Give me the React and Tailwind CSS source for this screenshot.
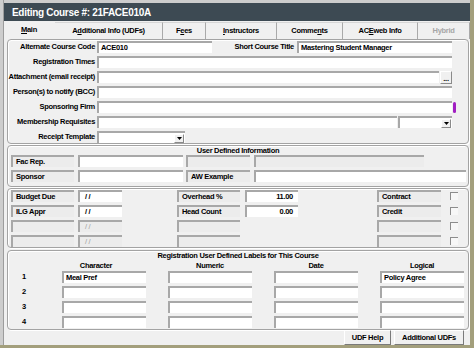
import React from 'react';

const field = 'h-[12px] bg-white border-t-2 border-l-2 border-[#a8a8a8] flex items-center pl-[2px] text-[7.5px] font-bold leading-none whitespace-nowrap overflow-hidden';
const labelBox = 'h-[12px] bg-[#ececec] border-t-2 border-l-2 border-[#a8a8a8] flex items-center pl-[3px] text-[7.5px] font-bold leading-none whitespace-nowrap';
const group = 'w-[462px] border border-[#a3a3a3] rounded-[4px] shadow-[inset_1px_1px_0_#ffffff,1px_1px_0_#ffffff]';

const Arrow = () => (
  <div className="w-[10px] h-[9px] mr-[1px] bg-[#f0f0f0] border border-t-white border-l-white border-r-[#8a8a8a] border-b-[#8a8a8a] flex items-center justify-center">
    <svg width="5" height="3" viewBox="0 0 5 3">
      <path d="M0 0h5L2.5 3z" fill="#000" />
    </svg>
  </div>
);

const Label = ({ children, className = 'w-[89px] pr-[2px]' }) => (
  <div className={`${className} text-right text-[7.5px] font-bold leading-none whitespace-nowrap`}>{children}</div>
);

const Check = () => (
  <div className="w-[8px] h-[8px] ml-[9px] bg-[#f7f7f7] border-t border-l border-[#8c8c8c]" />
);

const tabs = [
  { a: '', u: 'M', b: 'ain', w: 'w-[50px] mr-[1px]', active: true },
  { a: 'A', u: 'd', b: 'ditional Info (UDFs)', w: 'w-[108px]' },
  { a: 'F', u: 'e', b: 'es', w: 'w-[43px]' },
  { a: '', u: 'I', b: 'nstructors', w: 'w-[71px]' },
  { a: 'Comme', u: 'n', b: 'ts', w: 'w-[66px]' },
  { a: 'AC', u: 'E', b: 'web Info', w: 'w-[75px]' },
  { a: 'Hybrid', u: '', b: '', w: 'w-[52px]', disabled: true },
];

const budgetRows = [
  { l: 'Budget Due', d: true, o: 'Overhead %', v: '11.00', c: 'Contract' },
  { l: 'ILG Appr', d: true, o: 'Head Count', v: '0.00', c: 'Credit' },
  { l: '', d: false, o: '', v: null, c: '' },
  { l: '', d: false, o: '', v: null, c: '' },
];

const regRows = [
  ['Meal Pref', '', '', 'Policy Agree'],
  ['', '', '', ''],
  ['', '', '', ''],
  ['', '', '', ''],
];

export default function App() {
  return (
    <div className="w-[474px] h-[348px] bg-[#c9c9c9] flex flex-col overflow-hidden text-black tracking-[-0.3px] font-['Liberation_Sans',Arial,sans-serif]">
      <div className="flex h-[345px]">
        <div className="w-[4px] bg-[#cdcdcd] border-r border-[#9c9c9c]" />
        <div className="w-[466px] flex flex-col bg-[#f0f0f0]">
          <div className="h-[3px] bg-[#cdcdcd]" />
          <div className="h-[18px] bg-[#3d4a53] text-white text-[10px] tracking-[-0.3px] font-bold flex items-center pl-[8px]">
            Editing Course #: 21FACE010A
          </div>

          {/* tabs */}
          <div className="h-[18px] flex">
            {tabs.map((t, i) => (
              <div
                key={i}
                className={`${t.w} flex items-center justify-center text-[7.5px] font-bold ${t.active ? '' : 'border-t border-r border-t-[#d6d6d6] border-r-[#a9a9a9] mt-[1px]'} ${t.disabled ? 'text-[#a6a6a6]' : ''}`}
              >
                {t.a}
                {t.u && <span className="underline underline-offset-1">{t.u}</span>}
                {t.b}
              </div>
            ))}
          </div>

          <div className="pl-[3px] flex flex-col">
            {/* course fields */}
            <div className={`${group} h-[105px] pt-[1px] flex flex-col gap-[3px]`}>
              <div className="h-[12px] flex items-center">
                <Label>Alternate Course Code</Label>
                <div className={`${field} w-[115px]`}>ACE010</div>
                <Label className="w-[85px] pr-[3px]">Short Course Title</Label>
                <div className={`${field} w-[155px]`}>Mastering Student Manager</div>
              </div>
              <div className="h-[12px] flex items-center">
                <Label>Registration Times</Label>
                <div className={`${field} w-[355px]`} />
              </div>
              <div className="h-[12px] flex items-center">
                <Label>Attachment (email receipt)</Label>
                <div className={`${field} w-[342px]`} />
                <div className="w-[12px] h-[13px] ml-[1px] bg-[#f0f0f0] border border-t-white border-l-white border-r-[#8a8a8a] border-b-[#8a8a8a] flex items-end justify-center text-[7.5px] font-bold leading-[8px]">
                  ...
                </div>
              </div>
              <div className="h-[12px] flex items-center">
                <Label>Person(s) to notify (BCC)</Label>
                <div className={`${field} w-[355px]`} />
              </div>
              <div className="h-[12px] flex items-center">
                <Label>Sponsoring Firm</Label>
                <div className={`${field} w-[355px]`} />
                <div className="w-[3px] h-[11px] ml-[1px] mt-[1px] rounded-full bg-[#a11fc2]" />
              </div>
              <div className="h-[12px] flex items-center">
                <Label>Membership Requisites</Label>
                <div className={`${field} w-[300px]`} />
                <div className={`${field} w-[54px] ml-[1px] justify-end pl-0`}>
                  <Arrow />
                </div>
              </div>
              <div className="h-[12px] flex items-center">
                <Label>Receipt Template</Label>
                <div className={`${field} w-[88px] justify-end pl-0`}>
                  <Arrow />
                </div>
              </div>
            </div>

            {/* user defined information */}
            <div className={`${group} h-[42px] mt-[1px] flex flex-col`}>
              <div className="h-[9px] text-center text-[7.5px] font-bold leading-[9px]">User Defined Information</div>
              <div className="h-[12px] flex pl-[3px]">
                <div className={`${labelBox} w-[63px]`}>Fac Rep.</div>
                <div className={`${field} w-[105px] ml-[4px]`} />
                <div className={`${labelBox} w-[64px] ml-[3px]`} />
                <div className={`${labelBox} w-[170px] ml-[4px]`} />
              </div>
              <div className="h-[12px] flex pl-[3px] mt-[3px]">
                <div className={`${labelBox} w-[63px]`}>Sponsor</div>
                <div className={`${field} w-[105px] ml-[4px]`} />
                <div className={`${labelBox} w-[64px] ml-[3px]`}>AW Example</div>
                <div className={`${field} w-[212px] ml-[4px]`} />
              </div>
            </div>

            {/* budget */}
            <div className={`${group} h-[60px] mt-[1px] pt-[1px] flex flex-col gap-[3px]`}>
              {budgetRows.map((r, i) => (
                <div key={i} className="h-[12px] flex items-center pl-[3px]">
                  <div className={`${labelBox} w-[63px]`}>{r.l}</div>
                  <div className={`${r.d ? field : labelBox} w-[44px] ml-[4px] pl-[5px] ${r.d ? '' : 'text-[#a0a0a0] font-normal'}`}>/ /</div>
                  <div className={`${labelBox} w-[63px] ml-[55px]`}>{r.o}</div>
                  {r.v !== null ? (
                    <div className={`${field} w-[53px] ml-[5px] justify-end pr-[5px]`}>{r.v}</div>
                  ) : (
                    <div className="w-[53px] ml-[5px]" />
                  )}
                  <div className={`${labelBox} w-[64px] ml-[79px]`}>{r.c}</div>
                  <Check />
                </div>
              ))}
            </div>

            {/* registration labels */}
            <div className={`${group} h-[80px] mt-[2px] flex flex-col`}>
              <div className="h-[10px] text-center text-[7.5px] font-bold leading-[10px]">
                Registration User Defined Labels for This Course
              </div>
              <div className="h-[9px] grid grid-cols-[32px_84px_84px_84px_84px] gap-x-[22px] text-[7.5px] font-bold leading-[9px] text-center">
                <div />
                <div className="pr-[16px]">Character</div>
                <div>Numeric</div>
                <div>Date</div>
                <div>Logical</div>
              </div>
              <div className="mt-[1px] flex flex-col gap-[3px]">
                {regRows.map((row, i) => (
                  <div key={i} className="h-[12px] grid grid-cols-[32px_84px_84px_84px_84px] gap-x-[22px]">
                    <div className="text-center text-[7.5px] font-bold leading-[12px]">{i + 1}</div>
                    {row.map((v, j) => (
                      <div key={j} className={field}>{v}</div>
                    ))}
                  </div>
                ))}
              </div>
            </div>

            {/* buttons */}
            <div className="h-[15px] flex justify-end pr-[6px] gap-[3px]">
              <div className="w-[47px] h-[15px] bg-[#f0f0f0] border border-t-white border-l-white border-r-[#7a7a7a] border-b-[#7a7a7a] flex items-center justify-center text-[7.5px] font-bold">
                UDF Help
              </div>
              <div className="w-[70px] h-[15px] bg-[#f0f0f0] border border-t-white border-l-white border-r-[#7a7a7a] border-b-[#7a7a7a] flex items-center justify-center text-[7.5px] font-bold">
                Additional UDFs
              </div>
            </div>
          </div>
        </div>
        <div className="w-[4px] bg-[#a39f7c]" />
      </div>
      <div className="h-[3px] bg-[#a39f7c]" />
    </div>
  );
}
